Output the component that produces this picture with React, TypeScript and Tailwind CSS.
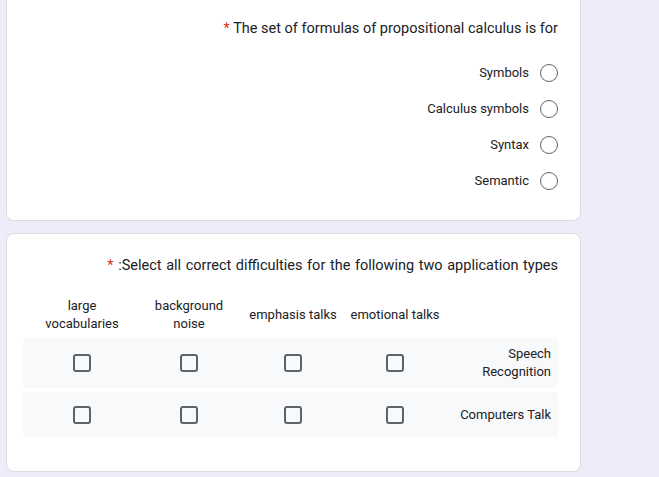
import React from "react";

const font = { fontFamily: "Roboto, 'Noto Sans', Arial, sans-serif" };

function Radio({ label }: { label: string }) {
  return (
    <div className="flex h-[36px] items-center justify-end gap-[11px]">
      <span className="text-[13px] text-[#202124]">{label}</span>
      <span className="box-border h-[18px] w-[18px] rounded-full border-[1.5px] border-[#5f6368]" />
    </div>
  );
}

function Box() {
  return <span className="box-border block h-[18px] w-[18px] rounded-[3px] border-2 border-[#5f6368]" />;
}

const colW = ["w-[118px]", "w-[96px]", "w-[112px]", "w-[92px]"];

function GridRow({ label, h }: { label: React.ReactNode; h: string }) {
  return (
    <div className={`flex ${h} items-center rounded-[4px] bg-[#f8f9fa]`}>
      {colW.map((w, i) => (
        <div key={i} className={`${w} flex shrink-0 justify-center`}>
          <Box />
        </div>
      ))}
      <div className="flex-1 pr-[7px] text-right text-[13px] leading-[18px] text-[#202124]">{label}</div>
    </div>
  );
}

export default function App() {
  return (
    <div style={font} className="h-[477px] w-[659px] overflow-hidden bg-[#f0ebf8] pl-[6px]">
      <div className="w-[575px] rounded-b-lg border border-t-0 border-[#dadce0] bg-white pb-[21px] pr-[22px] pt-[19px]">
        <div className="text-right text-[14.5px] leading-[20px] text-[#202124]">
          <span className="text-[#d93025]">*</span> The set of formulas of propositional calculus is for
        </div>
        <div className="mt-[16px] flex flex-col">
          <Radio label="Symbols" />
          <Radio label="Calculus symbols" />
          <Radio label="Syntax" />
          <Radio label="Semantic" />
        </div>
      </div>

      <div className="mt-[12px] w-[575px] rounded-lg border border-[#dadce0] bg-white pb-[34px] pl-[16px] pr-[22px] pt-[22px]">
        <div className="text-right text-[14.5px] leading-[20px] text-[#202124] [word-spacing:1px]">
          <span className="text-[#d93025]">*</span> :Select all correct difficulties for the following two application types
        </div>
        <div className="mt-[21px] flex h-[36px] items-center text-[13px] leading-[18px] text-[#202124]">
          <div className="flex w-[118px] shrink-0 justify-center text-center">
            <span className="w-[84px]">large vocabularies</span>
          </div>
          <div className="flex w-[96px] shrink-0 justify-center text-center">
            <span className="w-[86px]">background noise</span>
          </div>
          <div className="flex w-[112px] shrink-0 justify-center whitespace-nowrap text-center">emphasis talks</div>
          <div className="flex w-[92px] shrink-0 justify-center whitespace-nowrap text-center">emotional talks</div>
          <div className="flex-1" />
        </div>
        <div className="mt-[5px] flex flex-col gap-[4px]">
          <GridRow h="h-[50px]" label={<>Speech<br />Recognition</>} />
          <GridRow h="h-[45px]" label="Computers Talk" />
        </div>
      </div>
    </div>
  );
}
